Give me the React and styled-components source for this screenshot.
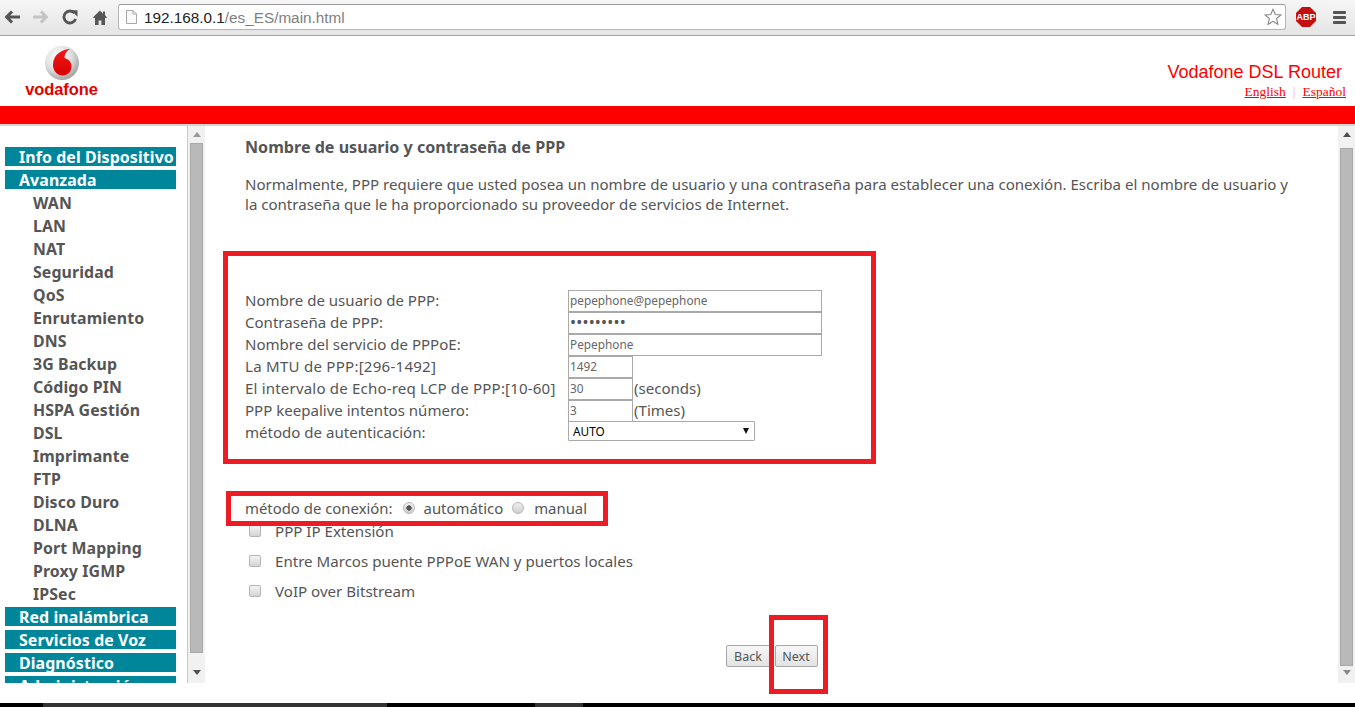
import React from "react";
import styled, { createGlobalStyle } from "styled-components";

const Global = createGlobalStyle`
  html, body { margin: 0; padding: 0; height: 707px; overflow: hidden; background: #fff; }
  * { box-sizing: border-box; }
`;

const uiFont = `"Noto Sans", "Open Sans", sans-serif`;

const Page = styled.div`
  width: 1355px; height: 707px; display: flex; flex-direction: column;
  font-family: ${uiFont}; color: #555; overflow: hidden;
`;

/* browser toolbar */
const Toolbar = styled.div`
  height: 36px; flex: none; display: flex; align-items: center;
  padding: 0 9px 1px 0;
  background: linear-gradient(#f6f6f6, #e4e4e4);
  border-bottom: 1px solid #a2a2a2;
`;
const ToolIcon = styled.svg`
  flex: none; display: block; margin-left: ${p => p.$ml || 0}px;
`;
const Address = styled.div`
  margin-left: 11px; width: 1169px; height: 26px; display: flex; align-items: center;
  background: #fff; border: 1px solid #b4b4b4; border-top-color: #9d9d9d; border-radius: 3px;
  padding: 0 3px 0 7px;
`;
const Url = styled.div`
  flex: 1; margin-left: 7px; padding-top: 1px; font: 15.3px/24px "Liberation Sans", sans-serif; color: #808080;
  b { font-weight: 400; color: #222; }
`;

/* site header */
const Header = styled.header`
  height: 70px; flex: none; display: flex; justify-content: space-between; padding: 10px 9px 0 25px;
`;
const Logo = styled.div`
  width: 73px; display: flex; flex-direction: column; align-items: center;
`;
const LogoWord = styled.div`
  font: 700 16.5px/16px "Liberation Sans", sans-serif; color: #e60000; margin-top: 1px; letter-spacing: -0.1px;
`;
const Brand = styled.div`
  display: flex; flex-direction: column; align-items: flex-end; padding-top: 15px;
`;
const BrandTitle = styled.div`
  font: 18px/22px "Liberation Sans", sans-serif; color: #f00; margin-right: 4px;
`;
const Langs = styled.div`
  display: flex; gap: 7px; font: 13.5px/14px "Liberation Serif", serif; color: #f3b0b0; margin-top: 2px;
  a { color: #f00; text-decoration: underline; }
`;
const RedBand = styled.div`
  height: 20px; flex: none; background: #f00; border-bottom: 2px solid #d2d2d2;
`;

/* body */
const Body = styled.div`
  height: 557px; flex: none; display: flex;
`;
const Sidebar = styled.aside`
  width: 187px; flex: none; height: 100%; overflow: hidden; padding: 21px 11px 0 5px;
  display: flex; flex-direction: column; gap: 4px;
  font-weight: 700; font-size: 15.9px; letter-spacing: 0.1px;
`;
const NavHead = styled.div`
  flex: none; height: 19px; line-height: 21px; padding-left: 14px; background: #00869b; color: #fff;
  white-space: nowrap;
`;
const NavItem = styled.div`
  flex: none; height: 19px; line-height: 21px; padding-left: 28px; color: #555; white-space: nowrap;
`;
const Scrollbar = styled.div`
  flex: none; height: 100%; background: #f1f1f1; display: flex; flex-direction: column;
  align-items: center; border-left: ${p => (p.$divider ? "1px solid #c8c8c8" : "0")};
  width: ${p => (p.$divider ? 18 : 17)}px;
  padding-top: 6px;
`;
const ArrowUp = styled.div`
  width: 0; height: 0; flex: none; border: 4px solid transparent; border-top: 0;
  border-bottom: 5px solid ${p => p.$color};
`;
const ArrowDown = styled.div`
  width: 0; height: 0; flex: none; border: 4px solid transparent; border-bottom: 0;
  border-top: 5px solid ${p => p.$color};
  margin-top: ${p => p.$mt}px;
`;
const Thumb = styled.div`
  width: 13px; flex: none; height: ${p => p.$h}px; margin-top: ${p => p.$mt}px;
  background: #b9b9b9; border: 1px solid #a8a8a8;
`;

const Main = styled.main`
  flex: 1; min-width: 0; padding-top: 11px; position: relative;
`;
const Title = styled.h1`
  margin: 0 0 17px 40px; font-size: 16.1px; line-height: 20px; font-weight: 700; color: #555;
`;
const Para = styled.p`
  margin: 0 0 37px 40px; width: 1050px; font-size: 15.05px; line-height: 20px; color: #555;
`;
const FormBox = styled.section`
  margin-left: 18px; width: 653px; height: 213px; border: 5px solid #ed1c24; padding: 33px 0 0 17px;
  display: flex; flex-direction: column;
`;
const Row = styled.div`
  display: grid; grid-template-columns: 323px auto; justify-content: start; align-items: center;
  height: 22px; font-size: 15.05px; line-height: 22px; white-space: nowrap;
`;
const Label = styled.span`
  padding-bottom: 2px; letter-spacing: ${p => p.$track || 0}px; margin-left: ${p => p.$ml || 0}px;
`;
const Field = styled.div`
  display: flex; align-items: center;
`;
const TextInput = styled.input`
  display: block; width: ${p => (p.$short ? 65 : 254)}px; height: 22px; padding: 0 1px 2px; margin: 0;
  border: 1px solid #a9a9a9; background: #fff; color: #666; outline: none;
  font: 11.8px ${uiFont};
  &[type="password"] { font-size: 16px; letter-spacing: 0.2px; color: #555; }
`;
const SelectWrap = styled.div`
  position: relative; width: 187px; height: 20px; align-self: start;
  &::after {
    content: ""; position: absolute; right: 6px; top: 7px; width: 0; height: 0;
    border: 3.5px solid transparent; border-bottom: 0; border-top: 6px solid #111;
  }
`;
const Select = styled.select`
  display: block; appearance: none; width: 100%; height: 100%; margin: 0; padding: 0 0 0 4px; background: #fff;
  border: 1px solid #a9a9a9; border-radius: 1px; color: #000; font: 11.8px ${uiFont}; outline: none;
`;
const MethodBox = styled.section`
  margin: 27px 0 0 21px; width: 382px; height: 35px; border: 5px solid #ed1c24; padding: 0 0 1px 14px;
  display: flex; align-items: center; font-size: 14.9px; white-space: nowrap; position: relative; z-index: 1;
`;
const Radio = styled.input`
  appearance: none; width: 12px; height: 12px; margin: 0 ${p => p.$mr}px 0 ${p => p.$ml}px; border-radius: 50%; flex: none;
  border: 1px solid #b5b5b5;
  background: ${p => (p.$on
    ? "radial-gradient(circle, #555 0 2.4px, transparent 3px), linear-gradient(#f2f2f2, #d0d0d0)"
    : "linear-gradient(#eee, #cfcfcf)")};
`;
const Checks = styled.div`
  margin: -4px 0 0 44px; display: flex; flex-direction: column; gap: 10px;
`;
const CheckRow = styled.label`
  height: 20px; display: flex; align-items: center; gap: 14px; font-size: 15.1px; line-height: 20px; padding-bottom: 3px;
`;
const Check = styled.input`
  appearance: none; width: 12px; height: 12px; margin: 0; border: 1px solid #b5b5b5; border-radius: 2px; flex: none;
  background: linear-gradient(#f4f4f4, #d4d4d4);
`;
const Buttons = styled.div`
  margin-top: 43px; display: flex; justify-content: center; gap: 4px;
`;
const NextWrap = styled.div`
  position: relative;
`;
const Callout = styled.div`
  position: absolute; left: -6px; top: -30px; width: 59px; height: 79px; border: 5px solid #ed1c24; pointer-events: none;
`;
const Button = styled.button`
  display: block; width: ${p => p.$w}px; height: 22px; padding: 0; margin: 0; font: 12.5px ${uiFont}; color: #555;
  background: linear-gradient(#f7f7f7, #e3e3e3); border: 1px solid #a6a6a6; border-radius: 2px;
`;
const Footer = styled.div`
  height: 20px; flex: none; background: #fff;
`;
const Taskbar = styled.div`
  height: 4px; flex: none; display: grid; grid-template-columns: 43px 344px 148px 48px 1fr; background: #000;
`;
const TaskSeg = styled.div`
  background: ${p => (p.$on ? "#333" : "#000")};
`;

const subs = ["WAN","LAN","NAT","Seguridad","QoS","Enrutamiento","DNS","3G Backup","Código PIN","HSPA Gestión","DSL","Imprimante","FTP","Disco Duro","DLNA","Port Mapping","Proxy IGMP","IPSec"];

export default function App() {
  return (
    <Page>
      <Global />
      <Toolbar>
        <ToolIcon $ml={5} width="15" height="14" viewBox="0 0 15 14">
          <path d="M7 1.5 1.7 7 7 12.5M2 7h13" fill="none" stroke="#555" strokeWidth="3" />
        </ToolIcon>
        <ToolIcon $ml={13} width="15" height="14" viewBox="0 0 15 14">
          <path d="M8 1.5 13.3 7 8 12.5M13 7H0" fill="none" stroke="#c4c4c4" strokeWidth="3" />
        </ToolIcon>
        <ToolIcon $ml={14} width="16" height="16" viewBox="0 0 16 16">
          <path d="M12.6 4.2A6 6 0 1 0 13.6 10" fill="none" stroke="#555" strokeWidth="2.8" />
          <path d="M9 1h6.5v6.5z" fill="#555" transform="translate(0 0.3)" />
        </ToolIcon>
        <ToolIcon $ml={15} width="14" height="15" viewBox="0 0 14 15">
          <path d="M7 .5 0 7.3l1 1L2 7.500V15h3.600v-4.600h2.800V15H12V7.500l1 .8 1-1-2-2V1.500h-2v2.300z" fill="#555" />
        </ToolIcon>
        <Address>
          <ToolIcon width="11" height="14" viewBox="0 0 11 14">
            <path d="M.5.5h6.500l3.500 3.500v9.500H.5zM7 .5V4h3.500" fill="#fafafa" stroke="#a8a8a8" />
          </ToolIcon>
          <Url><b>192.168.0.1</b>/es_ES/main.html</Url>
          <ToolIcon width="18" height="18" viewBox="0 0 18 18">
            <path d="M9 1.300l2.300 5.200 5.500.5-4.200 3.700 1.300 5.600L9 13.400l-4.900 2.900 1.300-5.600L1.200 7l5.500-.5z" fill="#fff" stroke="#888" strokeWidth="1.1" />
          </ToolIcon>
        </Address>
        <ToolIcon $ml={10} width="20" height="20" viewBox="0 0 20 20">
          <path d="M6 0h8l6 6v8l-6 6H6l-6-6V6z" fill="#c30f0f" />
          <text x="10" y="13.3" textAnchor="middle" fontFamily="Liberation Sans, sans-serif" fontWeight="700" fontSize="9" fill="#fff">ABP</text>
        </ToolIcon>
        <ToolIcon $ml={17} width="13" height="13" viewBox="0 0 13 13">
          <path d="M1 0h11a1 1 0 0 1 1 1.500a1 1 0 0 1-1 1.500H1a1 1 0 0 1-1-1.500a1 1 0 0 1 1-1.500zM1 5h11a1 1 0 0 1 1 1.500a1 1 0 0 1-1 1.500H1a1 1 0 0 1-1-1.500a1 1 0 0 1 1-1.500zM1 10h11a1 1 0 0 1 1 1.500a1 1 0 0 1-1 1.500H1a1 1 0 0 1-1-1.500a1 1 0 0 1 1-1.500z" fill="#555" />
        </ToolIcon>
      </Toolbar>

      <Header>
        <Logo>
          <svg width="34" height="34" viewBox="0 0 34 34" style={{ display: "block", flex: "none" }}>
            <defs>
              <radialGradient id="ball" cx="38%" cy="32%" r="75%">
                <stop offset="0" stopColor="#fff" />
                <stop offset=".55" stopColor="#dedede" />
                <stop offset="1" stopColor="#999" />
              </radialGradient>
              <linearGradient id="mark" x1="0" y1="0" x2="0" y2="1">
                <stop offset="0" stopColor="#f01818" />
                <stop offset="1" stopColor="#d80000" />
              </linearGradient>
            </defs>
            <circle cx="17" cy="17" r="17" fill="url(#ball)" />
            <path d="M25 3C18 3 8 8 8 19c0 6 4.500 10.500 9.500 10.500S26.500 25.500 26.500 20.500C26.500 15 22.500 13 19.500 12 19.500 8 22 4.500 25 3z" fill="url(#mark)" />
          </svg>
          <LogoWord>vodafone</LogoWord>
        </Logo>
        <Brand>
          <BrandTitle>Vodafone DSL Router</BrandTitle>
          <Langs>
            <a>English</a>
            <span>|</span>
            <a>Español</a>
          </Langs>
        </Brand>
      </Header>
      <RedBand />

      <Body>
        <Sidebar>
          <NavHead>Info del Dispositivo</NavHead>
          <NavHead>Avanzada</NavHead>
          {subs.map(s => <NavItem key={s}>{s}</NavItem>)}
          <NavHead>Red inalámbrica</NavHead>
          <NavHead>Servicios de Voz</NavHead>
          <NavHead>Diagnóstico</NavHead>
          <NavHead>Administración</NavHead>
        </Sidebar>
        <Scrollbar $divider>
          <ArrowUp $color="#9a9a9a" />
          <Thumb $mt={6} $h={510} />
          <ArrowDown $mt={17} $color="#505050" />
        </Scrollbar>

        <Main>
          <Title>Nombre de usuario y contraseña de PPP</Title>
          <Para>Normalmente, PPP requiere que usted posea un nombre de usuario y una contraseña para establecer una conexión. Escriba el nombre de usuario y la contraseña que le ha proporcionado su proveedor de servicios de Internet.</Para>

          <FormBox>
            <Row><Label>Nombre de usuario de PPP:</Label><Field><TextInput readOnly value="pepephone@pepephone" /></Field></Row>
            <Row><Label>Contraseña de PPP:</Label><Field><TextInput readOnly type="password" value="123456789" /></Field></Row>
            <Row><Label>Nombre del servicio de PPPoE:</Label><Field><TextInput readOnly value="Pepephone" /></Field></Row>
            <Row><Label $track={0.25}>La MTU de PPP:[296-1492]</Label><Field><TextInput $short readOnly value="1492" /></Field></Row>
            <Row><Label $track={0.18}>El intervalo de Echo-req LCP de PPP:[10-60]</Label><Field><TextInput $short readOnly value="30" /><Label $ml={1}>(seconds)</Label></Field></Row>
            <Row><Label>PPP keepalive intentos número:</Label><Field><TextInput $short readOnly value="3" /><Label $ml={1}>(Times)</Label></Field></Row>
            <Row>
              <Label>método de autenticación:</Label>
              <SelectWrap><Select defaultValue="AUTO"><option>AUTO</option></Select></SelectWrap>
            </Row>
          </FormBox>

          <MethodBox>
            <span>método de conexión:</span>
            <Radio type="radio" name="m" readOnly $on $ml={10} $mr={9} />
            <span>automático</span>
            <Radio type="radio" name="m2" readOnly $ml={9} $mr={10} />
            <span>manual</span>
          </MethodBox>

          <Checks>
            <CheckRow><Check type="checkbox" readOnly />PPP IP Extensión</CheckRow>
            <CheckRow><Check type="checkbox" readOnly />Entre Marcos puente PPPoE WAN y puertos locales</CheckRow>
            <CheckRow><Check type="checkbox" readOnly />VoIP over Bitstream</CheckRow>
          </Checks>

          <Buttons>
            <Button $w={45}>Back</Button>
            <NextWrap>
              <Button $w={43}>Next</Button>
              <Callout />
            </NextWrap>
          </Buttons>
        </Main>

        <Scrollbar>
          <ArrowUp $color="#505050" />
          <Thumb $mt={11} $h={518} />
          <ArrowDown $mt={4} $color="#8a8a8a" />
        </Scrollbar>
      </Body>

      <Footer />
      <Taskbar>
        <TaskSeg />
        <TaskSeg $on />
        <TaskSeg />
        <TaskSeg $on />
        <TaskSeg />
      </Taskbar>
    </Page>
  );
}
